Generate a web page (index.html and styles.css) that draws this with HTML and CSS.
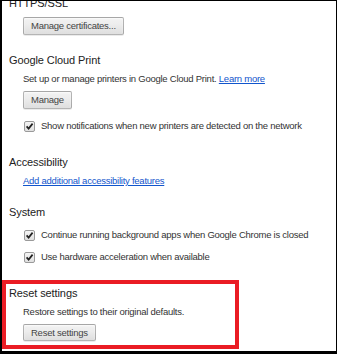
FILE: index.html
```html
<!DOCTYPE html>
<html>
<head>
<meta charset="utf-8">
<link rel="stylesheet" href="styles.css">
</head>
<body>
<div class="frame">
  <div class="content">
    <section class="section s-https">
      <h3 class="title">HTTPS/SSL</h3>
      <div class="body">
        <button class="btn btn-first">Manage certificates...</button>
      </div>
    </section>

    <section class="section s-print">
      <h3 class="title">Google Cloud Print</h3>
      <div class="body">
        <p class="text">Set up or manage printers in Google Cloud Print. <a class="link" href="#">Learn more</a></p>
        <button class="btn btn-manage">Manage</button>
        <label class="check check-notify">
          <svg class="box" width="11" height="11" viewBox="0 0 11 11"><defs><linearGradient id="g1" x1="0" y1="0" x2="0" y2="1"><stop offset="0" stop-color="#f6f6f6"/><stop offset="1" stop-color="#dedede"/></linearGradient></defs><rect x="0.5" y="0.5" width="10" height="10" rx="1.5" fill="url(#g1)" stroke="#9a9a9a"/><path d="M2.6 5.4 L4.6 7.6 L8.6 2.6" fill="none" stroke="#222" stroke-width="1.7"/></svg>
          <span>Show notifications when new printers are detected on the network</span>
        </label>
      </div>
    </section>

    <section class="section s-access">
      <h3 class="title">Accessibility</h3>
      <div class="body">
        <a class="link link-block" href="#">Add additional accessibility features</a>
      </div>
    </section>

    <section class="section s-system">
      <h3 class="title">System</h3>
      <div class="body">
        <label class="check check-bg">
          <svg class="box" width="11" height="11" viewBox="0 0 11 11"><rect x="0.5" y="0.5" width="10" height="10" rx="1.5" fill="url(#g1)" stroke="#9a9a9a"/><path d="M2.6 5.4 L4.6 7.6 L8.6 2.6" fill="none" stroke="#222" stroke-width="1.7"/></svg>
          <span>Continue running background apps when Google Chrome is closed</span>
        </label>
        <label class="check check-hw">
          <svg class="box" width="11" height="11" viewBox="0 0 11 11"><rect x="0.5" y="0.5" width="10" height="10" rx="1.5" fill="url(#g1)" stroke="#9a9a9a"/><path d="M2.6 5.4 L4.6 7.6 L8.6 2.6" fill="none" stroke="#222" stroke-width="1.7"/></svg>
          <span>Use hardware acceleration when available</span>
        </label>
      </div>
    </section>

    <section class="section s-reset">
      <h3 class="title">Reset settings</h3>
      <div class="body">
        <p class="text">Restore settings to their original defaults.</p>
        <button class="btn btn-reset">Reset settings</button>
      </div>
    </section>
  </div>
</div>
</body>
</html>
```

FILE: styles.css
```css
html, body {
  margin: 0;
  padding: 0;
  background: #fff;
}

.frame {
  width: 337px;
  height: 354px;
  box-sizing: border-box;
  border-top: 1px solid #000;
  border-left: 2px solid #000;
  border-right: 1px solid #000;
  border-bottom: 3px solid #000;
  overflow: hidden;
  font-family: "Liberation Sans", Arial, sans-serif;
  color: #333;
}

.content {
  margin-top: -5px;
}

.section {
  padding-left: 7px;
}

.title {
  margin: 0;
  font-size: 11px;
  line-height: 14px;
  font-weight: normal;
  color: #222;
  letter-spacing: -0.1px;
}

.body {
  margin-left: 14px;
  display: flex;
  flex-direction: column;
  align-items: flex-start;
}

.text {
  margin: 5px 0 0;
  font-size: 9.5px;
  line-height: 14px;
  letter-spacing: -0.25px;
  color: #333;
}

.link {
  color: #1155cc;
  text-decoration: underline;
}

.link-block {
  font-size: 9.5px;
  line-height: 14px;
  letter-spacing: -0.25px;
  margin-top: 5px;
}

.btn {
  font-family: "Liberation Sans", Arial, sans-serif;
  font-size: 9.5px;
  letter-spacing: -0.25px;
  color: #444;
  height: 18px;
  padding: 0 7px;
  border: 1px solid rgba(0, 0, 0, 0.25);
  border-radius: 2px;
  background: linear-gradient(#f2f2f2, #ededed 40%, #dedede);
  box-shadow: 0 1px 0 rgba(0, 0, 0, 0.08), inset 0 1px 2px rgba(255, 255, 255, 0.75);
  line-height: 16px;
}

.btn-first { margin-top: 7px; }
.btn-manage { margin-top: 5px; }
.btn-reset { margin-top: 5px; height: 17px; }

.check {
  display: flex;
  align-items: center;
  gap: 6px;
  font-size: 9.5px;
  line-height: 14px;
  letter-spacing: -0.25px;
  color: #333;
  margin-left: 1px;
}

.box { flex: none; }

.check-notify { margin-top: 10px; }
.check-bg { margin-top: 9px; }
.check-hw { margin-top: 8px; }

.s-print { margin-top: 18px; }
.s-access { margin-top: 22px; }
.s-system { margin-top: 17px; }

.s-reset {
  margin-top: 16px;
  width: 237px;
  box-sizing: border-box;
  border: 4px solid #ea1c24;
  padding: 2px 0 4px 3px;
  height: 69px;
}
```
